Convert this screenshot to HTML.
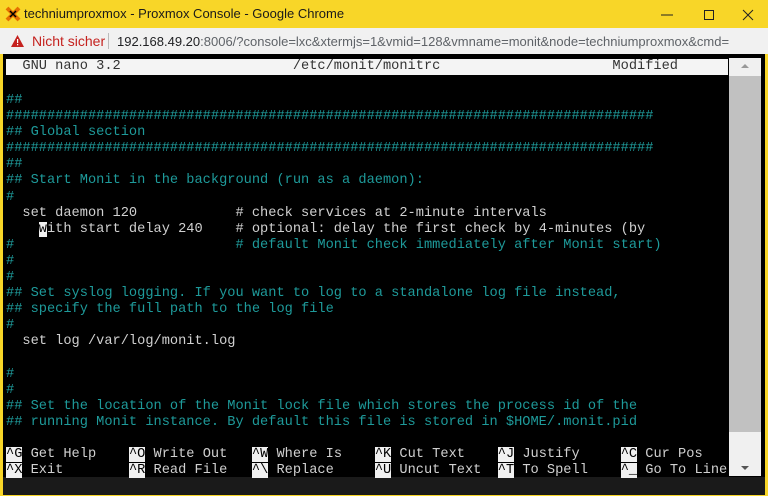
<!DOCTYPE html>
<html><head><meta charset="utf-8"><style>
*{margin:0;padding:0;box-sizing:border-box}
body{width:768px;height:496px;overflow:hidden;background:#f8d628;position:relative;font-family:"Liberation Sans",sans-serif}
#title{position:absolute;left:0;top:0;width:768px;height:28px;background:#f8d628}
#title .t{position:absolute;left:24px;top:6px;font-size:13px;color:#1a1a1a;white-space:nowrap}
#addr{position:absolute;left:0;top:28px;width:768px;height:26px;background:#f1f1f1;font-size:14px;white-space:nowrap}
#term{position:absolute;left:3px;top:54px;width:762px;height:441px;background:#000}
#bot{position:absolute;left:3px;top:477px;width:762px;height:18px;background:#1a1a1a}
pre{position:absolute;left:6px;font-family:"Liberation Mono",monospace;font-size:13.67px;line-height:16.1px;color:#d0d0d0;white-space:pre}
.c{color:#1e9a9a}
.k{background:#f0f0f0;color:#000}
#hd{position:absolute;left:6px;top:59px;width:722px;height:16px;background:#f4f4f4}
#hd pre{left:0;top:0;color:#333;line-height:16px}
#sb{position:absolute;left:729px;top:58px;width:32px;height:418px;background:#f0f0f0}
#thumb{position:absolute;left:729px;top:76px;width:32px;height:356px;background:#c1c1c1}
</style></head><body>
<div id="title">
<svg style="position:absolute;left:5px;top:6px" width="16" height="16" viewBox="0 0 16 16"><path d="M2 2L14 14M14 2L2 14" stroke="#e57000" stroke-width="4"/><path d="M5 5L11 11M11 5L5 11" stroke="#000" stroke-width="1.5"/></svg>
<div class="t">techniumproxmox - Proxmox Console - Google Chrome</div>
<svg style="position:absolute;left:655px;top:8px" width="110" height="14"><path d="M6 7H18" stroke="#222"/><rect x="49.5" y="2.5" width="9" height="9" fill="none" stroke="#222"/><path d="M88 2L98 12M98 2L88 12" stroke="#222"/></svg>
</div>
<div id="addr">
<svg style="position:absolute;left:11px;top:7px" width="13" height="12"><path d="M6.5 0L13 12H0Z" fill="#c5221f"/><rect x="6" y="4" width="1.2" height="4" fill="#fff"/><rect x="6" y="9" width="1.2" height="1.3" fill="#fff"/></svg>
<span style="position:absolute;left:32px;top:5px;color:#c5221f">Nicht sicher</span>
<span style="position:absolute;left:108px;top:5px;width:1px;height:16px;background:#bbb"></span>
<span style="position:absolute;left:117px;top:6px;font-size:13px;color:#202124;white-space:nowrap">192.168.49.20<span style="color:#5f6368">:8006/?console=lxc&amp;xtermjs=1&amp;vmid=128&amp;vmname=monit&amp;node=techniumproxmox&amp;cmd=</span></span>
</div>
<div id="term"></div>
<div id="bot"></div>
<div id="sb"></div><div id="thumb"></div>
<svg style="position:absolute;left:740px;top:63px" width="10" height="6"><path d="M1 5L5 1L9 5Z" fill="#999"/></svg>
<svg style="position:absolute;left:740px;top:465px" width="10" height="6"><path d="M1 1L5 5L9 1Z" fill="#555"/></svg>
<div id="hd"><pre>  GNU nano 3.2                     /etc/monit/monitrc                     Modified</pre></div>
<pre style="top:93px"><span class="c">##
###############################################################################
## Global section
###############################################################################
##
## Start Monit in the background (run as a daemon):
#</span>
  set daemon 120            # check services at 2-minute intervals
    <span class="k">w</span>ith start delay 240    # optional: delay the first check by 4-minutes (by
<span class="c">#                           # default Monit check immediately after Monit start)
#
#
## Set syslog logging. If you want to log to a standalone log file instead,
## specify the full path to the log file
#</span>
  set log /var/log/monit.log

<span class="c">#
#
## Set the location of the Monit lock file which stores the process id of the
## running Monit instance. By default this file is stored in $HOME/.monit.pid</span>

<span class="k">^G</span> Get Help    <span class="k">^O</span> Write Out   <span class="k">^W</span> Where Is    <span class="k">^K</span> Cut Text    <span class="k">^J</span> Justify     <span class="k">^C</span> Cur Pos
<span class="k">^X</span> Exit        <span class="k">^R</span> Read File   <span class="k">^\</span> Replace     <span class="k">^U</span> Uncut Text  <span class="k">^T</span> To Spell    <span class="k">^_</span> Go To Line</pre>
</body></html>
